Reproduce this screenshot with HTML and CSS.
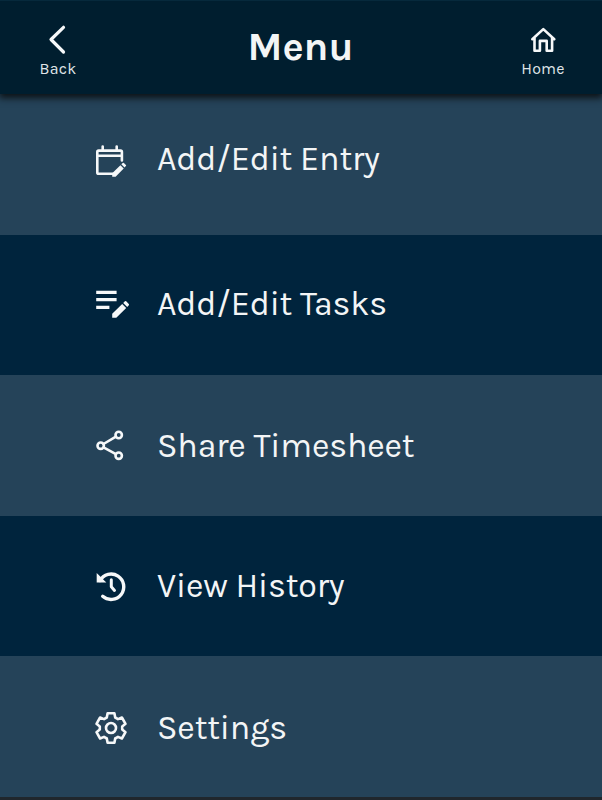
FILE: index.html
```html
<!DOCTYPE html>
<html lang="en">
<head>
    <meta charset="UTF-8">
    <meta name="viewport" content="width=device-width, initial-scale=1.0">
    <title>Menu</title>
    <link rel="stylesheet" href="styles.css">
</head>
<body>
    <header class="header">
        <a class="nav-link back">
            <svg width="30" height="32" viewBox="0 0 30 32">
                <path d="M20.5 3.3 8 15.5 20.5 28" stroke-width="3.2"/>
            </svg>
            <span>Back</span>
        </a>
        <h1>Menu</h1>
        <a class="nav-link home">
            <svg width="30" height="32" viewBox="0 0 30 32">
                <path d="M4.3 15.2 15.3 5.1 26.3 15.2M6.5 13.5v13.3h5.4v-9.9h6.8v9.9h5.4V13.5" stroke-width="2.6"/>
            </svg>
            <span>Home</span>
        </a>
    </header>

    <nav class="menu">
        <a class="menu-item entry">
            <svg class="icon" viewBox="0 0 36 36">
                <path d="M20 30.8H5.6q-1.3 0-1.3-1.3V8.9q0-1.3 1.3-1.3h22q1.3 0 1.3 1.3v8.6M4.3 12.8h24.6M9.7 3.5v4M23.7 3.5v4"/>
                <path class="solid" d="M19.2 33.8v-3.5l8.2-8.1 3.3 3.3-8.1 8.3zM28.3 21.3l1.4-1.4q.6-.5 1.2 0l2 2q.6.6 0 1.2l-1.4 1.4z"/>
            </svg>
            <span>Add/Edit Entry</span>
        </a>
        <a class="menu-item tasks">
            <svg class="icon" viewBox="0 0 36 36">
                <path class="solid" d="M3.2 4.8h20.4V8H3.2zM3.2 12h20.4v3.2H3.2zM3.2 19.8h13.2V23H3.2z"/>
                <path class="solid" d="M19.2 31.8v-4.1l10-9.8 4 4-9.9 9.9zM30.2 16.9l1.7-1.6q.6-.6 1.3 0l2.6 2.6q.6.7 0 1.3l-1.6 1.7z"/>
            </svg>
            <span>Add/Edit Tasks</span>
        </a>
        <a class="menu-item share">
            <svg class="icon" viewBox="0 0 36 36">
                <circle cx="25.7" cy="7" r="3.2"/>
                <circle cx="7.7" cy="17.7" r="3.2"/>
                <circle cx="25.7" cy="27.7" r="3.2"/>
                <path d="M10.5 16 22.9 8.6M10.5 19.4l12.4 6.8"/>
            </svg>
            <span>Share Timesheet</span>
        </a>
        <a class="menu-item history">
            <svg class="icon" viewBox="0 0 36 36">
                <path d="M7 12.5A12.7 12.7 0 1 1 9.7 28.3" stroke-width="3.4"/>
                <path d="M18.3 11.8v7l3.2 3.6" stroke-width="3"/>
                <path class="solid" d="M3.7 5v9.6H13.3z"/>
            </svg>
            <span>View History</span>
        </a>
        <a class="menu-item settings">
            <svg class="icon" viewBox="-18 -18 36 36">
                <path d="M-3.4-14.7H3.4L4.2-10.5 7-8.9 10.9-10.5 14.5-4.2 11.2-1.6V1.6L14.5 4.2 10.9 10.5 7 8.9 4.2 10.5 3.4 14.7H-3.4L-4.2 10.5-7 8.9-10.9 10.5-14.5 4.2-11.2 1.6V-1.6L-14.5-4.2-10.9-10.5-7-8.9-4.2-10.5Z"/>
                <circle r="5"/>
            </svg>
            <span>Settings</span>
        </a>
    </nav>
</body>
</html>
```
FILE: styles.css
```css
* {
    box-sizing: border-box;
}
body {
    margin: 0;
    height: 800px;
    overflow: hidden;
    background-color: #20272d;
    color: #f3f5f6;
    font-family: Karla, Roboto, sans-serif;
}
svg {
    display: block;
    fill: none;
    stroke: #f6f8f9;
    stroke-width: 2.6;
    stroke-linecap: round;
    stroke-linejoin: round;
}
.solid {
    fill: #f6f8f9;
    stroke: none;
}
.header {
    position: relative;
    z-index: 1;
    display: flex;
    justify-content: space-between;
    height: 94px;
    padding: 0 29px 0 28px;
    background-color: #001e2f;
    border-top: 1px solid #06293c;
    box-shadow: 0 3px 7px 1px #0c1216;
}
.header h1 {
    margin: 0;
    font-size: 40px;
    line-height: 92px;
}
.nav-link {
    display: flex;
    flex-direction: column;
    align-items: center;
    width: 60px;
    padding-top: 23px;
    font-size: 16px;
    line-height: 26px;
    letter-spacing: 0.2px;
    color: #dfe4e7;
}
.menu {
    display: grid;
    grid-template-rows: repeat(5, 140.6px);
}
.menu-item {
    display: flex;
    align-items: center;
    gap: 28px;
    padding-left: 93px;
    background-color: #254359;
    font-size: 34px;
    line-height: 40px;
    letter-spacing: -0.18px;
    white-space: nowrap;
}
.menu-item:nth-child(even) {
    background-color: #00243d;
}
.icon {
    width: 36px;
    height: 36px;
    flex: none;
}
.entry {
    padding-bottom: 7px;
}
.entry span {
    padding-bottom: 4px;
}
.tasks {
    padding-bottom: 2px;
}
.share,
.settings {
    padding-top: 2px;
}
```
